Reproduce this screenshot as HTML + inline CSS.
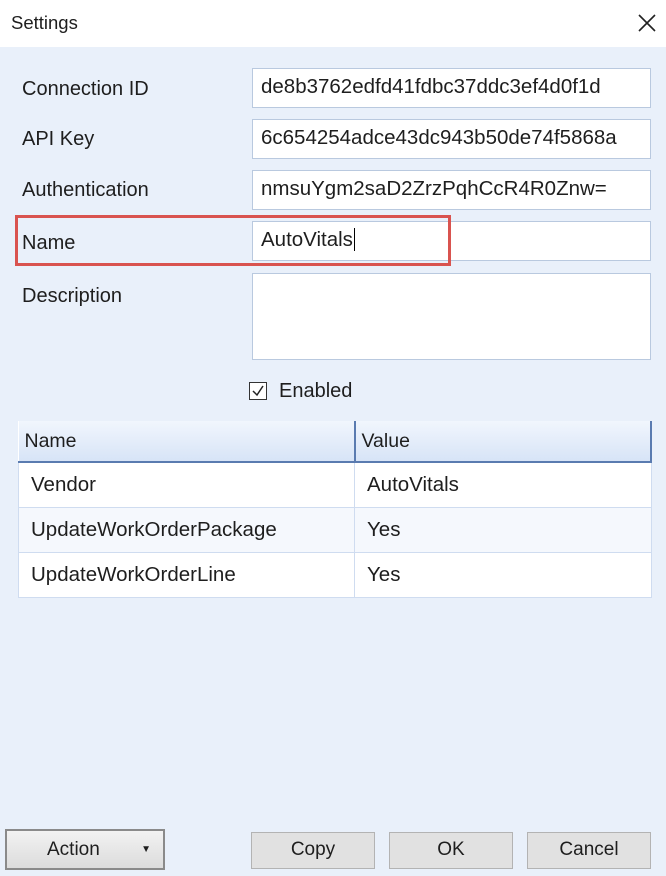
<!DOCTYPE html>
<html><head><style>
body{margin:0;width:666px;height:876px;background:#e9f0fa;font-family:"Liberation Sans",sans-serif;color:#1e1e1e;position:relative;overflow:hidden;font-size:20px}
.abs{position:absolute}
.title{left:0;top:0;width:666px;height:47px;background:#fff}
.inp{position:absolute;left:252px;width:399px;background:#fff;border:1px solid #b9c9df;box-sizing:border-box;padding-left:8px;line-height:36px;white-space:nowrap;overflow:hidden;font-size:20.5px}
.lbl{position:absolute;left:22px}
.btn{position:absolute;background:#e1e1e1;border:1px solid #b3b3b3;box-sizing:border-box;text-align:center;line-height:34px;font-size:19px}
table{position:absolute;left:18px;top:421px;width:634px;border-collapse:collapse;background:#fff}
td{border:1px solid #cfdcf0;height:44px;padding:0 0 0 12px;font-size:20.5px}
th{height:38px;text-align:left;font-weight:normal;padding-left:6px;background:linear-gradient(#f1f6fd,#d7e4f7);border-bottom:2px solid #5a7bb0;border-right:2px solid #5a7bb0;font-size:19.5px}
</style></head><body>
<div class="abs title"></div>
<div class="abs" style="left:11px;top:12px;font-size:18.5px">Settings</div>
<svg class="abs" style="left:638px;top:14px" width="18" height="18"><path d="M1 1L17 17M17 1L1 17" stroke="#222" stroke-width="1.6"/></svg>
<div class="lbl" style="top:78px">Connection ID</div>
<div class="inp" style="top:68px;height:40px">de8b3762edfd41fdbc37ddc3ef4d0f1d</div>
<div class="lbl" style="top:128px">API Key</div>
<div class="inp" style="top:119px;height:40px">6c654254adce43dc943b50de74f5868a</div>
<div class="lbl" style="top:179px">Authentication</div>
<div class="inp" style="top:170px;height:40px">nmsuYgm2saD2ZrzPqhCcR4R0Znw=</div>
<div class="lbl" style="top:232px">Name</div>
<div class="inp" style="top:221px;height:40px">AutoVitals<span style="border-left:1.5px solid #000;margin-left:1px"></span></div>
<div class="abs" style="left:15px;top:215px;width:436px;height:51px;border:3px solid #d9534f;box-sizing:border-box"></div>
<div class="lbl" style="top:285px">Description</div>
<div class="inp" style="top:273px;height:87px"></div>
<div class="abs" style="left:249px;top:382px;width:18px;height:18px;border:1px solid #333;background:#fff;box-sizing:border-box"></div>
<svg class="abs" style="left:251px;top:384px" width="14" height="14"><path d="M2 7L6 11L12 2" stroke="#222" stroke-width="1.5" fill="none"/></svg>
<div class="abs" style="left:279px;top:380px">Enabled</div>
<table>
<tr><th style="width:328px">Name</th><th>Value</th></tr>
<tr><td>Vendor</td><td>AutoVitals</td></tr>
<tr><td style="background:#f5f8fd">UpdateWorkOrderPackage</td><td style="background:#f5f8fd">Yes</td></tr>
<tr><td>UpdateWorkOrderLine</td><td>Yes</td></tr>
</table>
<div class="btn" style="left:5px;top:829px;width:160px;height:41px;border:2px solid #8a8a8a;background:linear-gradient(#f2f2f2,#dcdcdc);line-height:37px;text-align:left;padding-left:40px">Action<span style="position:absolute;right:12px;font-size:10px">▼</span></div>
<div class="btn" style="left:251px;top:832px;width:124px;height:37px">Copy</div>
<div class="btn" style="left:389px;top:832px;width:124px;height:37px">OK</div>
<div class="btn" style="left:527px;top:832px;width:124px;height:37px">Cancel</div>
</body></html>
